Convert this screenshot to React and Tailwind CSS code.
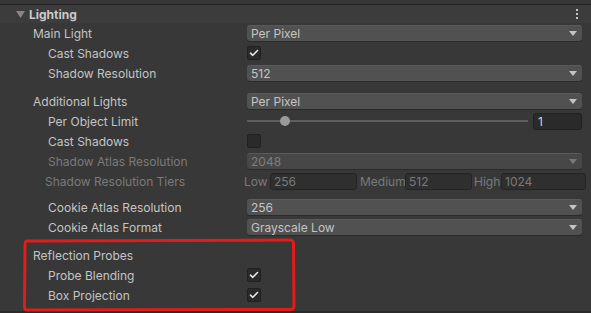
import React from "react";

const font = { fontFamily: "Inter, 'Noto Sans', sans-serif" };

function Arrow({ dim }) {
  return (
    <svg width="8" height="5" viewBox="0 0 8 5" className="mr-[5px]">
      <path d="M0 0 L8 0 L4 5 Z" fill={dim ? "#7a7a7a" : "#c4c4c4"} />
    </svg>
  );
}

function Dropdown({ value, dim }) {
  return (
    <div
      className={`flex items-center justify-between h-[16px] w-[335px] rounded-[3px] border-t border-[#5a5a5a] ${
        dim ? "bg-[#474747] text-[#7e7e7e] border-[#4b4b4b]" : "bg-[#515151] text-[#c4c4c4]"
      } shadow-[0_1px_0_#2a2a2a]`}
    >
      <span className="pl-[4px] pt-[1px] leading-none">{value}</span>
      <Arrow dim={dim} />
    </div>
  );
}

function Check({ checked }) {
  return (
    <div className="w-[14px] h-[14px] rounded-[2px] bg-[#2a2a2a] border border-[#202020] flex items-center justify-center">
      {checked && (
        <svg width="10" height="8" viewBox="0 0 10 8">
          <path d="M1.5 4.2 L3.8 6.3 L8.5 1.5" stroke="#e6e6e6" strokeWidth="1.6" fill="none" strokeLinecap="round" strokeLinejoin="round" />
        </svg>
      )}
    </div>
  );
}

function Row({ label, indent = 33, dim, children }) {
  return (
    <div className="flex items-center h-[20px]">
      <div
        className={`w-[247px] shrink-0 pt-[2px] ${dim ? "text-[#7a7a7a]" : "text-[#c4c4c4]"}`}
        style={{ paddingLeft: indent }}
      >
        {label}
      </div>
      <div className="flex items-center">{children}</div>
    </div>
  );
}

function Field({ value, w }) {
  return (
    <div className={`h-[17px] ${w} bg-[#2f2f2f] border border-[#242424] rounded-[3px] flex items-center pl-[3px] pt-[1px] text-[#7a7a7a]`}>
      {value}
    </div>
  );
}

export default function App() {
  return (
    <div className="relative w-[591px] h-[313px] bg-[#383838] overflow-hidden text-[12px]" style={font}>
      {/* top strip */}
      <div className="h-[4px] bg-[#383838]" />
      <div className="h-[1px] bg-[#232323]" />

      {/* header */}
      <div className="flex items-center justify-between h-[18px] bg-[#3c3c3c]">
        <div className="flex items-center">
          <svg width="9" height="7" viewBox="0 0 9 7" className="ml-[16px] mr-[4px]">
            <path d="M0 0 L9 0 L4.5 7 Z" fill="#858585" />
          </svg>
          <span className="font-bold text-[#cacaca] pt-[1px]">Lighting</span>
        </div>
        <div className="flex flex-col gap-[2px] mr-[13px]">
          <div className="w-[2px] h-[2px] bg-[#c4c4c4]" />
          <div className="w-[2px] h-[2px] bg-[#c4c4c4]" />
          <div className="w-[2px] h-[2px] bg-[#c4c4c4]" />
        </div>
      </div>

      {/* main light */}
      <Row label="Main Light">
        <Dropdown value="Per Pixel" />
      </Row>
      <Row label="Cast Shadows" indent={48}>
        <Check checked />
      </Row>
      <Row label="Shadow Resolution" indent={48}>
        <Dropdown value="512" />
      </Row>

      {/* additional lights */}
      <div className="mt-[8px]">
        <Row label="Additional Lights">
          <Dropdown value="Per Pixel" />
        </Row>
        <Row label="Per Object Limit" indent={48}>
          <div className="relative w-[281px] h-[10px] flex items-center">
            <div className="w-full h-[2px] bg-[#5e5e5e]" />
            <div className="absolute left-[33px] w-[10px] h-[10px] rounded-full bg-[#9a9a9a]" />
          </div>
          <div className="ml-[5px] w-[49px] h-[17px] bg-[#2a2a2a] border border-[#212121] rounded-[3px] flex items-center pl-[4px] pt-[1px] text-[#d2d2d2]">
            1
          </div>
        </Row>
        <Row label="Cast Shadows" indent={48}>
          <Check />
        </Row>
        <Row label="Shadow Atlas Resolution" indent={48} dim>
          <Dropdown value="2048" dim />
        </Row>
        <div className="flex items-center h-[20px] text-[#7a7a7a]">
          <div className="w-[244px] shrink-0 pl-[45px] pt-[2px]">Shadow Resolution Tiers</div>
          <span className="w-[26px] pt-[2px]">Low</span>
          <Field value="256" w="w-[87px]" />
          <span className="ml-[3px] w-[45px] pt-[2px]">Medium</span>
          <Field value="512" w="w-[67px]" />
          <span className="ml-[2px] w-[27px] pt-[2px]">High</span>
          <Field value="1024" w="w-[85px]" />
        </div>
      </div>

      {/* cookies */}
      <div className="mt-[6px]">
        <Row label="Cookie Atlas Resolution" indent={48}>
          <Dropdown value="256" />
        </Row>
        <Row label="Cookie Atlas Format" indent={48}>
          <Dropdown value="Grayscale Low" />
        </Row>
      </div>

      {/* reflection probes */}
      <div className="mt-[8px]">
        <Row label="Reflection Probes">
          <span />
        </Row>
        <Row label="Probe Blending" indent={48}>
          <Check checked />
        </Row>
        <Row label="Box Projection" indent={48}>
          <Check checked />
        </Row>
      </div>

      <div className="absolute left-0 right-0 bottom-0 h-[2px] bg-[#2a2a2a]" />

      {/* annotation */}
      <svg className="absolute left-0 top-0 pointer-events-none" width="591" height="313">
        <path
          d="M27 241 L290 240 Q294 240 293.5 245 L294 306 Q294 309.5 290 309.5 L27 310 Q24.5 310 24.5 306 L25 245 Q25 241 27 241 Z"
          stroke="#e31b1b"
          strokeWidth="3"
          fill="none"
        />
      </svg>
    </div>
  );
}
